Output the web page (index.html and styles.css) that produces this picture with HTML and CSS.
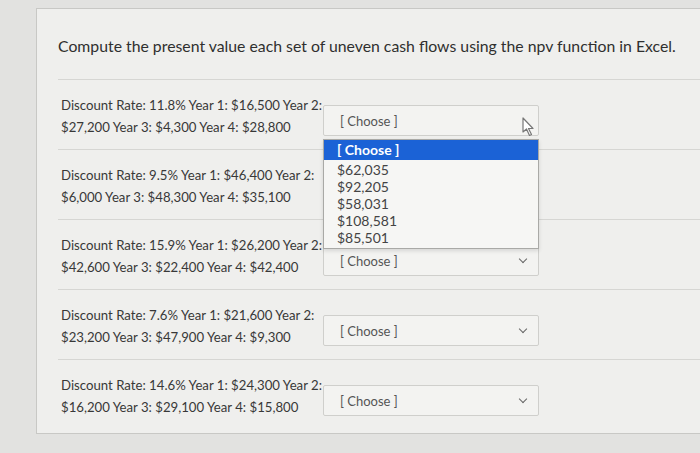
FILE: index.html
```html
<!DOCTYPE html>
<html lang="en">
<head>
  <meta charset="UTF-8">
  <title>Present Value Question</title>
  <link rel="stylesheet" href="styles.css">
</head>
<body>
  <div class="card">
    <p class="prompt">Compute the present value each set of uneven cash flows using the npv function in Excel.</p>
    <div class="answers">
      <div class="row">
        <p class="flows">Discount Rate: 11.8% Year 1: $16,500 Year 2: $27,200 Year 3: $4,300 Year 4: $28,800</p>
        <div class="select-wrap">
          <div class="select open"><span>[ Choose ]</span></div>
          <ul class="options">
            <li class="active">[ Choose ]</li>
            <li>$62,035</li>
            <li>$92,205</li>
            <li>$58,031</li>
            <li>$108,581</li>
            <li>$85,501</li>
          </ul>
          <svg class="cursor" width="14" height="20" viewBox="0 0 14 20">
            <path d="M1 1 L1 15 L4.5 12 L7.5 18.5 L9.5 17.5 L6.5 11.5 L11 11.5 Z" fill="#fff" stroke="#777" stroke-width="1.2" stroke-linejoin="round"/>
          </svg>
        </div>
      </div>
      <div class="row">
        <p class="flows">Discount Rate: 9.5% Year 1: $46,400 Year 2: $6,000 Year 3: $48,300 Year 4: $35,100</p>
        <div class="select-wrap">
          <!-- hidden behind the open list above -->
          <div class="select covered"><span>[ Choose ]</span><i class="chev"></i></div>
        </div>
      </div>
      <div class="row">
        <p class="flows">Discount Rate: 15.9% Year 1: $26,200 Year 2: $42,600 Year 3: $22,400 Year 4: $42,400</p>
        <div class="select-wrap">
          <div class="select"><span>[ Choose ]</span><i class="chev"></i></div>
        </div>
      </div>
      <div class="row">
        <p class="flows">Discount Rate: 7.6% Year 1: $21,600 Year 2: $23,200 Year 3: $47,900 Year 4: $9,300</p>
        <div class="select-wrap">
          <div class="select"><span>[ Choose ]</span><i class="chev"></i></div>
        </div>
      </div>
      <div class="row last">
        <p class="flows">Discount Rate: 14.6% Year 1: $24,300 Year 2: $16,200 Year 3: $29,100 Year 4: $15,800</p>
        <div class="select-wrap">
          <div class="select"><span>[ Choose ]</span><i class="chev"></i></div>
        </div>
      </div>
    </div>
  </div>
</body>
</html>
```

FILE: styles.css
```css
body {
  font-family: 'Lato', 'Open Sans', sans-serif;
  background-color: #e2e2e0;
  margin: 0;
  padding: 0;
  overflow: hidden;
}
.card {
  margin: 8px 0 0 36px;
  width: 664px;
  height: 426px;
  background-color: #efefed;
  border: 1px solid #c8c8c5;
  border-right: none;
  box-sizing: border-box;
  padding: 27px 0 0 21px;
}
.prompt {
  margin: 0;
  font-size: 15.8px;
  color: #2f2f2f;
}
.answers {
  margin-top: 24px;
  border-top: 1px solid #d6d6d3;
}
.row {
  display: flex;
  align-items: flex-start;
  height: 70px;
  border-bottom: 1px solid #d6d6d3;
  box-sizing: border-box;
  padding: 14px 0 0 3px;
}
.row.last {
  border-bottom: none;
}
.flows {
  margin: 0;
  flex: 0 0 264px;
  font-size: 13.2px;
  line-height: 22px;
  color: #383838;
}
.select-wrap {
  position: relative;
  margin-left: -2px;
  margin-top: 11px;
}
.select {
  width: 216px;
  height: 31px;
  border: 1px solid #cfcfcc;
  border-radius: 2px;
  background-color: #f3f3f1;
  box-sizing: border-box;
  display: flex;
  align-items: center;
  justify-content: space-between;
  padding: 0 12px 0 16px;
  font-size: 13px;
  color: #555;
}
.select.covered {
  visibility: hidden;
}
.chev {
  width: 5px;
  height: 5px;
  border-right: 1.5px solid #666;
  border-bottom: 1.5px solid #666;
  transform: rotate(45deg);
  margin-top: -4px;
}
.options {
  position: absolute;
  z-index: 5;
  top: 34px;
  left: 0;
  width: 216px;
  margin: 0;
  padding: 0 0 2px 0;
  list-style: none;
  background-color: #f6f6f4;
  border: 1px solid #a9a9a6;
  box-shadow: 0 2px 4px rgba(0,0,0,0.12);
  box-sizing: border-box;
}
.options li {
  font-size: 14px;
  line-height: 17px;
  color: #444;
  padding-left: 13px;
}
.options li.active {
  background-color: #1b62d6;
  color: #fff;
  font-weight: bold;
  line-height: 20px;
  margin-bottom: 1px;
}
.cursor {
  position: absolute;
  z-index: 6;
  left: 199px;
  top: 12px;
}
```
